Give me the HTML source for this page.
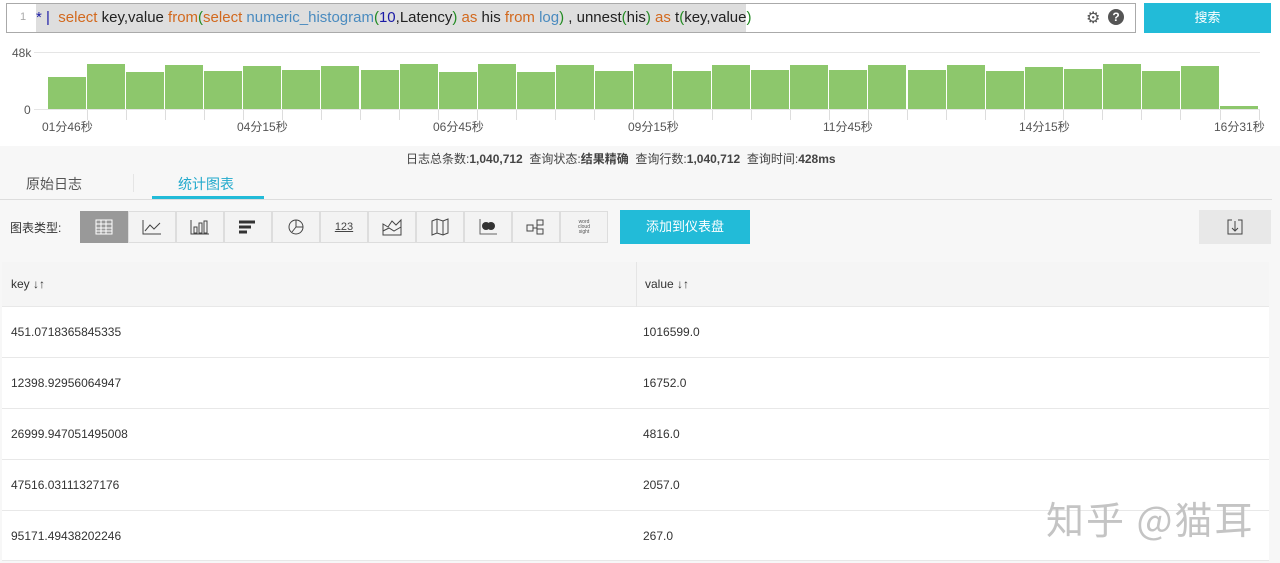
<!DOCTYPE html><html><head><meta charset="utf-8"><style>
*{margin:0;padding:0;box-sizing:border-box}
body{width:1280px;height:563px;overflow:hidden;background:#f7f7f7;font-family:"Liberation Sans","Noto Sans CJK SC",sans-serif;position:relative;font-size:12px;color:#333}
.a{position:absolute}
.top{left:0;top:0;width:1280px;height:146px;background:#fff}
.q{left:6px;top:3px;width:1130px;height:30px;border:1px solid #aaa;background:#fff}
.qs{left:36px;top:4px;width:710px;height:28px;background:#dedede}
.code{left:36px;top:9px;font-size:15px;white-space:nowrap;color:#222}
.o{color:#d2691e}.b{color:#4a8bbf}.g{color:#228b22}.n{color:#1a1aa6}
.btn{background:#22bbd8;color:#fff;text-align:center;font-size:13px}
.bar{position:absolute;background:#8dc76c;bottom:454px}
.tick{position:absolute;top:110px;width:1px;height:10px;background:#ddd}
.xl{position:absolute;top:118px;font-size:12px;color:#555}
.ib{position:absolute;top:211px;width:48px;height:32px;background:#f3f3f3;border:1px solid #ddd;display:flex;align-items:center;justify-content:center}
.row{position:absolute;left:2px;width:1267px;background:#fff;border-bottom:1px solid #e8e8e8;font-size:12px;color:#333}
.row span{position:absolute;top:50%;transform:translateY(-50%)}
</style></head><body>
<div class="a top"></div>
<div class="a q"></div><div class="a qs"></div>
<div class="a" style="left:20px;top:11px;color:#aaa;font-size:11px">1</div>
<div class="a code"><span class="n">*</span> <span class="n">|</span> &nbsp;<span class="o">select</span> key,value <span class="o">from</span><span class="g">(</span><span class="o">select</span> <span class="b">numeric_histogram</span><span class="g">(</span><span class="n">10</span>,Latency<span class="g">)</span> <span class="o">as</span> his <span class="o">from</span> <span class="b">log</span><span class="g">)</span> , unnest<span class="g">(</span>his<span class="g">)</span> <span class="o">as</span> t<span class="g">(</span>key,value<span class="g">)</span></div>
<div class="a" style="left:1086px;top:8px;font-size:16px;color:#555">⚙</div>
<div class="a" style="left:1108px;top:9px;width:16px;height:16px;border-radius:50%;background:#555;color:#fff;font-size:12px;text-align:center;line-height:16px;font-weight:bold">?</div>
<div class="a btn" style="left:1144px;top:3px;width:127px;height:30px;line-height:30px">搜索</div>
<div class="a" style="left:12px;top:46px;font-size:12px;color:#555">48k</div>
<div class="a" style="left:24px;top:103px;font-size:12px;color:#555">0</div>
<div class="a" style="left:34px;top:52px;width:1226px;height:1px;background:#e5e5e5"></div>
<div class="a" style="left:34px;top:109px;width:1226px;height:1px;background:#e5e5e5"></div>
<div id="bars"></div>
<div class="xl" style="left:42px">01分46秒</div><div class="xl" style="left:237px">04分15秒</div><div class="xl" style="left:433px">06分45秒</div><div class="xl" style="left:628px">09分15秒</div><div class="xl" style="left:823px">11分45秒</div><div class="xl" style="left:1019px">14分15秒</div><div class="xl" style="left:1214px">16分31秒</div>
<div class="a" style="left:406px;top:150px;font-size:12px;color:#444">日志总条数:<b>1,040,712</b>&nbsp; 查询状态:<b>结果精确</b>&nbsp; 查询行数:<b>1,040,712</b>&nbsp; 查询时间:<b>428ms</b></div>
<div class="a" style="left:26px;top:174px;font-size:14px;color:#555">原始日志</div>
<div class="a" style="left:133px;top:174px;width:1px;height:18px;background:#e5e5e5"></div>
<div class="a" style="left:178px;top:174px;font-size:14px;color:#22aacc">统计图表</div>
<div class="a" style="left:152px;top:196px;width:112px;height:3px;background:#22bbd8"></div>
<div class="a" style="left:0;top:199px;width:1272px;height:1px;background:#ddd"></div>
<div class="a" style="left:10px;top:219px;font-size:12px;color:#333">图表类型:</div>
<div class="ib" style="left:80px;background:#999;border-color:#999"><svg width="18" height="16"><rect x="1" y="1" width="16" height="14" fill="none" stroke="#fff"/><path d="M1 5h16M1 9h16M1 12h16M6 1v14M11 1v14" stroke="#fff"/></svg></div>
<div class="ib" style="left:128px"><svg width="20" height="16"><path d="M1 1v14h18M3 12l5-6 4 4 6-6" stroke="#444" fill="none"/></svg></div>
<div class="ib" style="left:176px"><svg width="20" height="16"><path d="M1 1v14h18" stroke="#444" fill="none"/><rect x="4" y="8" width="3" height="6" fill="none" stroke="#444"/><rect x="9" y="4" width="3" height="10" fill="none" stroke="#444"/><rect x="14" y="2" width="3" height="12" fill="none" stroke="#444"/></svg></div>
<div class="ib" style="left:224px"><svg width="18" height="14"><path d="M0 2h16M0 7h12M0 12h8" stroke="#333" stroke-width="3"/></svg></div>
<div class="ib" style="left:272px"><svg width="18" height="18"><circle cx="9" cy="9" r="7" fill="none" stroke="#444"/><path d="M9 2v7h7M9 9l-4 5" stroke="#444" fill="none"/></svg></div>
<div class="ib" style="left:320px;font-size:11px;text-decoration:underline;color:#444">123</div>
<div class="ib" style="left:368px"><svg width="20" height="18"><path d="M1 17V6l5 3 4-6 4 4 5-5v15zM1 13l6-3 5 3 7-4" stroke="#444" fill="none"/></svg></div>
<div class="ib" style="left:416px"><svg width="18" height="18"><path d="M1 3l5-2 6 2 5-2v14l-5 2-6-2-5 2zM6 1v14M12 3v14" stroke="#444" fill="none"/></svg></div>
<div class="ib" style="left:464px"><svg width="20" height="18"><path d="M2 1v15h17" stroke="#666" fill="none"/><circle cx="8" cy="8" r="4" fill="#333"/><circle cx="13" cy="8" r="4" fill="#333"/></svg></div>
<div class="ib" style="left:512px"><svg width="20" height="18"><rect x="1" y="7" width="6" height="6" fill="none" stroke="#444"/><rect x="11" y="2" width="6" height="5" fill="none" stroke="#444"/><rect x="11" y="11" width="6" height="5" fill="none" stroke="#444"/><path d="M7 10h4M11 5v9" stroke="#444"/></svg></div>
<div class="ib" style="left:560px;font-size:5px;color:#555;line-height:5px;text-align:center">word<br>cloud<br>sight</div>
<div class="a btn" style="left:620px;top:210px;width:130px;height:34px;line-height:34px">添加到仪表盘</div>
<div class="a" style="left:1199px;top:210px;width:72px;height:34px;background:#e8e8e8;display:flex;align-items:center;justify-content:center"><svg width="16" height="16"><path d="M5 1H1v14h14V1h-4M8 2v10M5 9l3 3 3-3" stroke="#444" fill="none"/></svg></div>
<div class="row" style="top:262px;height:45px;background:#f5f5f5"><span style="left:9px">key ↓↑</span><span style="left:643px">value ↓↑</span></div>
<div class="a" style="left:636px;top:262px;width:1px;height:45px;background:#e5e5e5"></div>
<div class="row" style="top:307px;height:51px"><span style="left:9px">451.0718365845335</span><span style="left:641px">1016599.0</span></div>
<div class="row" style="top:358px;height:51px"><span style="left:9px">12398.92956064947</span><span style="left:641px">16752.0</span></div>
<div class="row" style="top:409px;height:51px"><span style="left:9px">26999.947051495008</span><span style="left:641px">4816.0</span></div>
<div class="row" style="top:460px;height:51px"><span style="left:9px">47516.03111327176</span><span style="left:641px">2057.0</span></div>
<div class="row" style="top:511px;height:50px"><span style="left:9px">95171.49438202246</span><span style="left:641px">267.0</span></div>
<div class="a" style="left:1046px;top:490px;font-size:38px;color:#c4c4c4;letter-spacing:2px;font-family:'Noto Sans CJK SC',sans-serif">知乎 @猫耳</div>
<script>
var t=[77,64,72,65,71,66,70,66,70,64,72,64,72,65,71,64,71,65,70,65,70,65,70,65,71,67,69,64,71,66,106],h='';
for(var i=0;i<31;i++){var x=48+i*39.07;h+='<div class="bar" style="left:'+x+'px;width:38px;top:'+t[i]+'px;height:'+(109-t[i])+'px"></div><div class="tick" style="left:'+(x+38.5)+'px"></div>';}
document.getElementById('bars').innerHTML=h;
</script>
</body></html>
